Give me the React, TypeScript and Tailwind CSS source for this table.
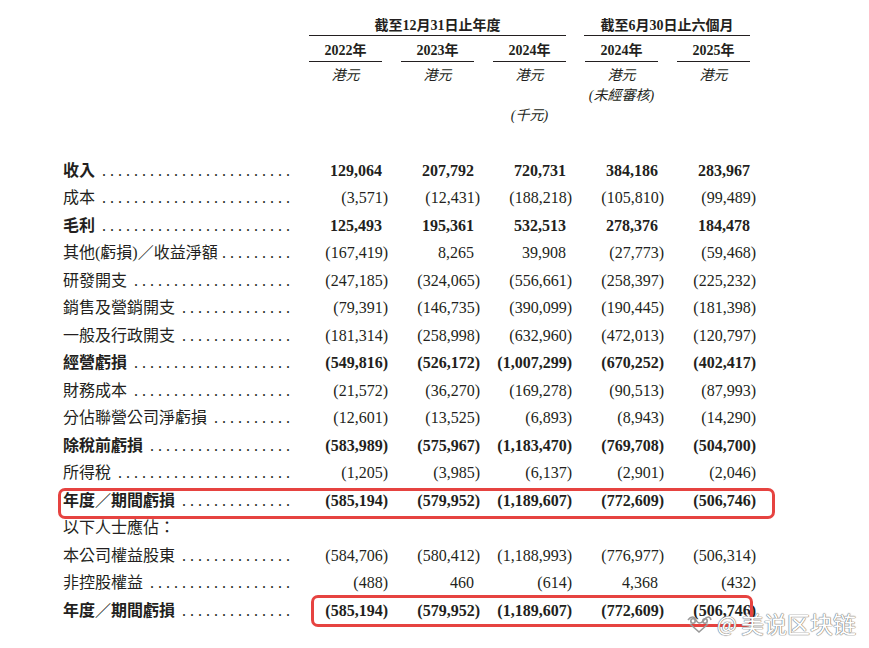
const rows: { label: string; vals: string[]; bold?: boolean; semi?: boolean; noDots?: boolean; box?: 1 | 2 }[] = [
  { label: "收入", vals: ["129,064", "207,792", "720,731", "384,186", "283,967"], bold: true },
  { label: "成本", vals: ["(3,571)", "(12,431)", "(188,218)", "(105,810)", "(99,489)"] },
  { label: "毛利", vals: ["125,493", "195,361", "532,513", "278,376", "184,478"], bold: true },
  { label: "其他(虧損)／收益淨額", vals: ["(167,419)", "8,265", "39,908", "(27,773)", "(59,468)"] },
  { label: "研發開支", vals: ["(247,185)", "(324,065)", "(556,661)", "(258,397)", "(225,232)"] },
  { label: "銷售及營銷開支", vals: ["(79,391)", "(146,735)", "(390,099)", "(190,445)", "(181,398)"] },
  { label: "一般及行政開支", vals: ["(181,314)", "(258,998)", "(632,960)", "(472,013)", "(120,797)"] },
  { label: "經營虧損", vals: ["(549,816)", "(526,172)", "(1,007,299)", "(670,252)", "(402,417)"], bold: true },
  { label: "財務成本", vals: ["(21,572)", "(36,270)", "(169,278)", "(90,513)", "(87,993)"] },
  { label: "分佔聯營公司淨虧損", vals: ["(12,601)", "(13,525)", "(6,893)", "(8,943)", "(14,290)"] },
  { label: "除稅前虧損", vals: ["(583,989)", "(575,967)", "(1,183,470)", "(769,708)", "(504,700)"], bold: true },
  { label: "所得稅", vals: ["(1,205)", "(3,985)", "(6,137)", "(2,901)", "(2,046)"] },
  { label: "年度／期間虧損", vals: ["(585,194)", "(579,952)", "(1,189,607)", "(772,609)", "(506,746)"], bold: true, semi: true, box: 1 },
  { label: "以下人士應佔：", vals: ["", "", "", "", ""], noDots: true },
  { label: "本公司權益股東", vals: ["(584,706)", "(580,412)", "(1,188,993)", "(776,977)", "(506,314)"] },
  { label: "非控股權益", vals: ["(488)", "460", "(614)", "4,368", "(432)"] },
  { label: "年度／期間虧損", vals: ["(585,194)", "(579,952)", "(1,189,607)", "(772,609)", "(506,746)"], bold: true, semi: true, box: 2 },
];

// rough width of a label so the leader dots fill the rest of the 227px cell
function leader(label: string) {
  let w = 0;
  for (const ch of label) w += ch.charCodeAt(0) > 255 ? 16 : 5.5;
  const n = Math.max(0, Math.floor((229 - w) / 8));
  return ". ".repeat(n).trimEnd();
}

const grid = "grid grid-cols-[227px_73px_73px_73px_73px_73px] gap-x-[19px]";
const cjk = "font-['Liberation_Serif','Noto_Sans_CJK_TC',serif]";

export default function App() {
  return (
    <div className={`w-[869px] h-[648px] bg-white text-[#231f20] relative overflow-hidden pl-[63px] ${cjk}`}>
      {/* header */}
      <div className={`${grid} text-[14px] leading-[18px]`}>
        <div />
        <div className="col-span-3 pt-[17px] border-b border-[#231f20] text-center font-bold">截至12月31日止年度</div>
        <div className="col-span-2 ml-[-1px] pt-[17px] border-b border-[#231f20] text-center font-bold">截至6月30日止六個月</div>
      </div>
      <div className={`${grid} text-[14px] leading-[18px]`}>
        <div />
        {["2022年", "2023年", "2024年", "2024年", "2025年"].map((y, i) => (
          <div key={i} className="pt-[6px] pb-[1px] border-b border-[#231f20] text-center font-bold">{y}</div>
        ))}
      </div>
      <div className={`${grid} text-[14px] leading-[18px] h-[95px]`}>
        <div />
        <div className="pt-[5px] text-center italic">港元</div>
        <div className="pt-[5px] text-center italic">港元</div>
        <div className="pt-[5px] text-center italic">
          <div>港元</div>
          <div className="mt-[22px]">(千元)</div>
        </div>
        <div className="pt-[5px] text-center italic">
          <div>港元</div>
          <div className="mt-[2px] -mx-[10px]">(未經審核)</div>
        </div>
        <div className="pt-[5px] text-center italic">港元</div>
      </div>

      {/* body */}
      <div className="text-[16px]">
        {rows.map((r, i) => (
          <div key={i} className={`${grid} h-[27.5px] items-center relative`}>
            <div className={`flex items-center justify-between whitespace-nowrap ${r.bold ? (r.semi ? "font-semibold" : "font-bold") : ""}`}>
              <span>{r.label}</span>
              {!r.noDots && <span className="font-normal">{leader(r.label)}</span>}
            </div>
            {r.vals.map((v, j) => (
              <div
                key={j}
                className={`text-right whitespace-nowrap font-['Liberation_Serif',serif] ${r.bold ? "font-bold" : ""} ${v.startsWith("(") ? "-mr-[6px]" : ""}`}
              >
                {v}
              </div>
            ))}
            {r.box === 1 && (
              <div className="absolute left-[-5px] top-[1px] w-[717px] h-[31px] border-[3px] border-[#e64340] rounded-[7px] pointer-events-none" />
            )}
            {r.box === 2 && (
              <div className="absolute left-[248px] top-[-2px] w-[442px] h-[32px] border-[3px] border-[#e64340] rounded-[7px] pointer-events-none" />
            )}
          </div>
        ))}
      </div>

      {/* watermark */}
      <div className="absolute left-[685px] top-[610px] flex items-center gap-[4px] text-white font-['Noto_Sans_CJK_SC',sans-serif] text-[23px] leading-[26px] [text-shadow:0_0_1px_#777,0_0_1px_#777,0_0_1px_#777]">
        <svg width="28" height="22" viewBox="0 0 28 22" fill="none" stroke="#999" strokeWidth="1.6">
          <path d="M3 8c3-4 6-4 8 0s5 4 8 0 6-4 7 0" />
          <path d="M5 12l9 8 9-8" />
          <circle cx="8" cy="9" r="2.2" />
          <circle cx="20" cy="9" r="2.2" />
        </svg>
        <span className="text-[21px]">@</span>
        <span>美说区块链</span>
      </div>
    </div>
  );
}
